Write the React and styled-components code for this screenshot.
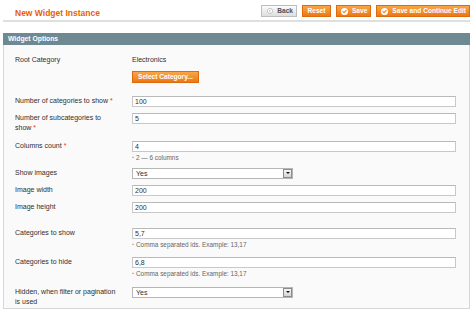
import React from 'react'
import styled, {createGlobalStyle} from 'styled-components'

const GlobalStyle = createGlobalStyle`
    body {
        margin: 0;
        background: #fff;
        font-family: "Liberation Sans", Arial, sans-serif;
    }
`

const rows = [
    {label: "Number of categories to show", required: true, type: "text", value: "100", mt: 7},
    {label: "Number of subcategories to show", required: true, type: "text", value: "5"},
    {label: "Columns count", required: true, type: "text", value: "4", note: "2 — 6 columns", mt: 1},
    {label: "Show images", type: "select", value: "Yes"},
    {label: "Image width", type: "text", value: "200"},
    {label: "Image height", type: "text", value: "200"},
    {label: "Categories to show", type: "text", value: "5,7", note: "Comma separated ids. Example: 13,17", mt: 9},
    {label: "Categories to hide", type: "text", value: "6,8", note: "Comma separated ids. Example: 13,17", mt: 2},
    {label: "Hidden, when filter or pagination is used", type: "select", value: "Yes", mt: 3},
]

function CheckIcon() {
    return (
        <svg width="7" height="7" viewBox="0 0 14 14">
            <circle cx="7" cy="7" r="7" fill="#fff" />
            <path d="M3.8 7.2 L6.1 9.4 L10.3 4.6" fill="none" stroke="#ef7f1a" strokeWidth="2.2" strokeLinecap="round" strokeLinejoin="round" />
        </svg>
    )
}

function BackIcon() {
    return (
        <svg width="6" height="6" viewBox="0 0 12 12">
            <circle cx="6" cy="6" r="5.3" fill="#fff" stroke="#a9a9a9" strokeWidth="1.2" />
            <path d="M7 3.8 L4.6 6 L7 8.2" fill="none" stroke="#8a8a8a" strokeWidth="1.4" />
        </svg>
    )
}

function Field({row}) {
    return (
        <FieldRow $mt={row.mt}>
            <Label $required={row.required}>{row.label}</Label>
            <div>
                {row.type === "select" ? (
                    <SelectBox>
                        <span>{row.value}</span>
                        <SelectArrow />
                    </SelectBox>
                ) : (
                    <TextInput defaultValue={row.value} />
                )}
                {row.note && <Note>{row.note}</Note>}
            </div>
        </FieldRow>
    )
}

export default function App() {
    return (
        <Page>
            <GlobalStyle />
            <Header>
                <Title>New Widget Instance</Title>
                <Buttons>
                    <Button $variant="back"><BackIcon />Back</Button>
                    <Button $variant="plain">Reset</Button>
                    <Button><CheckIcon />Save</Button>
                    <Button><CheckIcon />Save and Continue Edit</Button>
                </Buttons>
            </Header>

            <Panel>
                <PanelHead>Widget Options</PanelHead>
                <PanelBody>
                    <FieldRow>
                        <Label>Root Category</Label>
                        <div>
                            <Plain>Electronics</Plain>
                            <Button $variant="chooser">Select Category...</Button>
                        </div>
                    </FieldRow>
                    {rows.map((row) => (
                        <Field key={row.label} row={row} />
                    ))}
                </PanelBody>
            </Panel>
        </Page>
    )
}

const paddings = {
    back: "0 3px 0 5px",
    plain: "0 4.5px",
    chooser: "0 5px",
}

const Page = styled.div`
    padding: 0 4px 0 3px;
`

const Header = styled.div`
    display: flex;
    justify-content: space-between;
    align-items: flex-start;
    height: 12px;
    padding: 5px 0 3px;
    border-bottom: 2px solid #dfdfdf;
`

const Title = styled.h3`
    margin: 2px 0 0;
    padding-left: 12px;
    font-size: 8.5px;
    line-height: 12px;
    font-weight: bold;
    color: #eb5e00;
`

const Buttons = styled.div`
    display: flex;
    gap: 5px;
`

const Button = styled.button`
    display: flex;
    align-items: center;
    gap: 4px;
    box-sizing: border-box;
    height: 12px;
    margin: ${p => p.$variant === "chooser" ? "5px 0 0" : "0"};
    padding: ${p => paddings[p.$variant] || "0 3px 0 4px"};
    border: 1px solid ${p => p.$variant === "back" ? "#bdbdbd" : "#df6a0c"};
    background: ${p => p.$variant === "back"
        ? "linear-gradient(#fbfbfb, #dedede)"
        : "linear-gradient(#f8a649, #ec7812)"};
    color: ${p => p.$variant === "back" ? "#4f4f4f" : "#fff"};
    font-family: "Liberation Sans", Arial, sans-serif;
    font-size: 6.6px;
    font-weight: bold;
    line-height: 10px;
    white-space: nowrap;
`

const Panel = styled.div`
    margin-top: 11px;
`

const PanelHead = styled.div`
    height: 12px;
    padding-left: 5px;
    background: #6f8992;
    color: #fff;
    font-size: 6.8px;
    font-weight: bold;
    line-height: 12px;
`

const PanelBody = styled.div`
    padding: 10px 13px 0 11px;
    background: #fafafa;
    border: 1px solid #d6d6d6;
    border-top: 0;
`

const FieldRow = styled.div`
    display: grid;
    grid-template-columns: 117px 1fr;
    margin-top: ${p => p.$mt || 0}px;
    padding-bottom: 6px;

    &:last-child {
        padding-bottom: 0;
    }
`

const Label = styled.div`
    padding-right: 14px;
    font-size: 7px;
    line-height: 10.5px;
    color: #2f2f2f;

    &::after {
        content: "${p => p.$required ? "\\00a0*" : ""}";
        color: #eb340a;
    }
`

const Plain = styled.div`
    font-size: 7px;
    line-height: 10.5px;
    color: #2f2f2f;
`

const TextInput = styled.input`
    display: block;
    box-sizing: border-box;
    width: 100%;
    height: 11px;
    margin: 0;
    padding: 0 2px;
    border: 1px solid #c8c8c8;
    border-top-color: #b9b9b9;
    background: #fff;
    font-family: "Liberation Sans", Arial, sans-serif;
    font-size: 7px;
    line-height: 9px;
    color: #2f2f2f;
    outline: none;
`

const SelectBox = styled.div`
    display: flex;
    justify-content: space-between;
    align-items: center;
    box-sizing: border-box;
    width: 161px;
    height: 11px;
    padding: 0 0 0 3px;
    border: 1px solid #b6b6b6;
    background: #fff;
    font-size: 7px;
    color: #2f2f2f;
`

const SelectArrow = styled.span`
    position: relative;
    box-sizing: border-box;
    width: 9px;
    height: 9px;
    border: 1px solid #8c8c8c;
    background: linear-gradient(#f6f6f6, #d4d4d4);

    &::after {
        content: "";
        position: absolute;
        left: 1.5px;
        top: 2.5px;
        border-left: 2px solid transparent;
        border-right: 2px solid transparent;
        border-top: 2.5px solid #111;
    }
`

const Note = styled.div`
    position: relative;
    margin-top: 1px;
    padding-left: 4px;
    font-size: 6.4px;
    line-height: 9px;
    color: #666;

    &::before {
        content: "";
        position: absolute;
        left: 0;
        top: 3.5px;
        border-left: 1.3px solid transparent;
        border-right: 1.3px solid transparent;
        border-bottom: 2px solid #aaa;
    }
`
